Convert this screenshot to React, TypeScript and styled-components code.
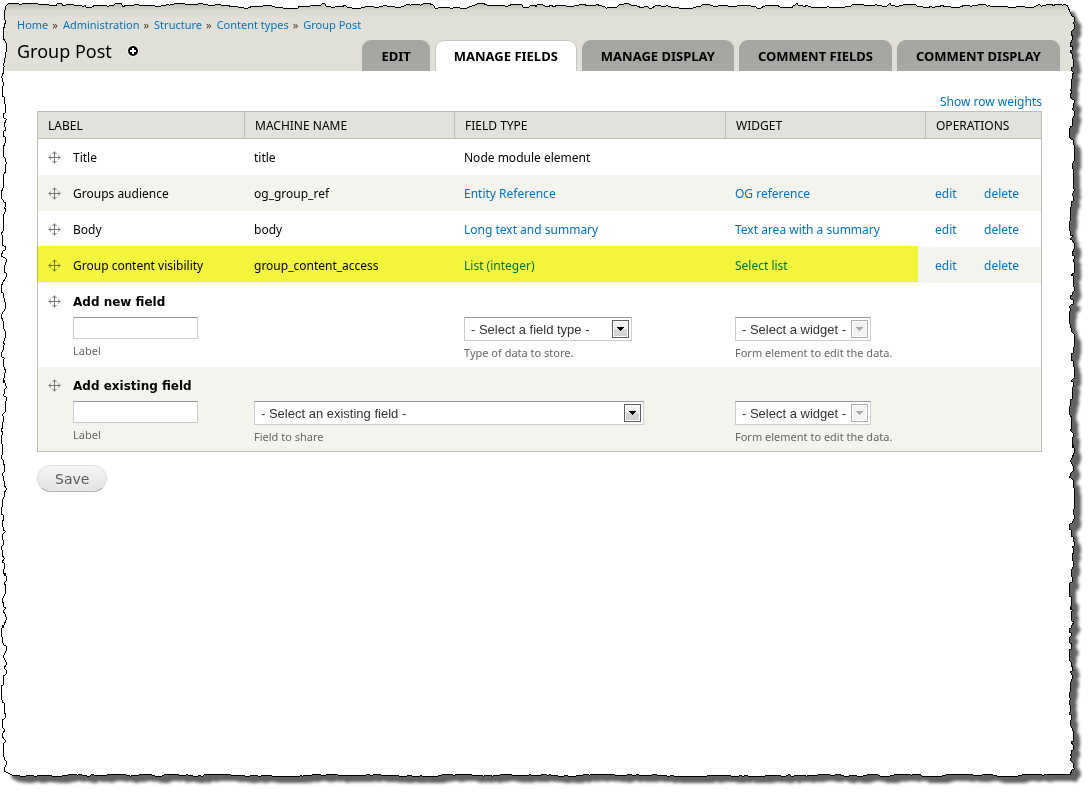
import React, { useId, useLayoutEffect, useRef, useState } from 'react';
import styled, { createGlobalStyle, css } from 'styled-components';

const GlobalStyle = createGlobalStyle`
  *, *::before, *::after { box-sizing: border-box; }
  body {
    margin: 0;
    background: #fff;
    color: #000;
    font: 12px/18px "Noto Sans", "Open Sans", sans-serif;
  }
`;

const Page = styled.div`
  position: relative;
  min-height: 100vh;
  padding-bottom: 48px;
  overflow: hidden;
`;

const Header = styled.header`
  padding: 18px 31px 0 17px;
  background: linear-gradient(#bdbdb6 4px, #d8d8d0 10px, #e0e0d8 18px);
`;

const Breadcrumb = styled.nav`
  display: flex;
  gap: 4px;
  margin-bottom: 8px;
  font-size: 11px;
  line-height: 14px;
`;

const Separator = styled.span`
  padding-right: 1px;
  color: #523d1f;
`;

const Link = styled.a`
  color: #0074bd;
  text-decoration: none;
`;

const HeaderRow = styled.div`
  display: flex;
  justify-content: space-between;
  align-items: flex-end;
`;

const TitleArea = styled.div`
  display: flex;
  align-items: center;
  align-self: flex-start;
  gap: 15px;
`;

const Title = styled.h1`
  margin: 0;
  font-size: 18px;
  font-weight: 400;
  line-height: 22px;
`;

const IconButton = styled.button`
  display: flex;
  flex: none;
  padding: 0;
  border: 0;
  background: none;
  cursor: pointer;
`;

const Tabs = styled.nav`
  display: flex;
  gap: 5px;
`;

const Tab = styled.a<{ $active?: boolean }>`
  padding: 0 18px;
  border: 1px solid #a6a7a2;
  border-bottom: 0;
  border-radius: 9px 9px 0 0;
  background: #a6a7a2;
  color: #000;
  font-size: 13px;
  font-weight: 700;
  line-height: 30px;
  text-decoration: none;
  text-transform: uppercase;
  white-space: nowrap;
  ${(p) =>
    p.$active &&
    css`
      border-color: #c6c7c0;
      background: #fff;
    `}
`;

const Content = styled.main`
  padding: 23px 49px 0 37px;
`;

const WeightToggle = styled.div`
  margin-bottom: 1px;
  line-height: 16px;
  text-align: right;
`;

const FieldTable = styled.table`
  width: 100%;
  table-layout: fixed;
  border: 1px solid #bebfb9;
  border-spacing: 0;
`;

const Col = styled.col<{ $width: number }>`
  width: ${(p) => p.$width}px;
`;

const HeadCell = styled.th`
  height: 27px;
  padding: 2px 10px 0;
  border-right: 1px solid #bebfb9;
  border-bottom: 1px solid #bebfb9;
  background: #e1e2dc;
  font-weight: 400;
  text-align: left;
  text-transform: uppercase;
  &:last-child { border-right: 0; }
`;

const Row = styled.tr<{ $shaded?: boolean }>`
  position: relative;
  background: ${(p) => (p.$shaded ? '#f3f4ee' : '#fff')};
`;

const Cell = styled.td`
  height: 36px;
  padding: 2px 0 0 9px;
  white-space: nowrap;
`;

const FormCell = styled.td`
  height: 84px;
  padding: 34px 0 0 9px;
  vertical-align: top;
  white-space: nowrap;
`;

const AddCell = styled(FormCell)`
  padding-top: 10px;
`;

const LabelGroup = styled.div`
  display: flex;
  align-items: flex-start;
  gap: 12px;
  padding-left: 1px;
`;

const HandleButton = styled(IconButton)`
  margin-top: 2px;
  cursor: move;
`;

const FieldStack = styled.div<{ $indent?: boolean }>`
  display: flex;
  flex-direction: column;
  align-items: flex-start;
  gap: 4px;
  margin: ${(p) => (p.$indent ? '6px 0 0 26px' : '0')};
`;

const AddTitle = styled.strong`
  font-family: "DejaVu Sans", Verdana, sans-serif;
`;

const TextInput = styled.input`
  width: 125px;
  height: 22px;
  padding: 2px;
  border: 1px solid #ccc;
  border-top-color: #999;
  background: #fff;
`;

const Hint = styled.label`
  color: #666;
  font-size: 11px;
  line-height: 16px;
`;

const SelectBox = styled.div<{ $width: number }>`
  position: relative;
  width: ${(p) => p.$width}px;
  height: 24px;
`;

const Select = styled.select`
  appearance: none;
  width: 100%;
  height: 24px;
  padding: 0 20px 0 6px;
  border: 1px solid #ccc;
  border-top-color: #999;
  border-radius: 0;
  background: #fff;
  color: #333;
  font: 13px "Liberation Sans", Arial, sans-serif;
  opacity: 1;
`;

const SelectArrow = styled.span<{ $disabled?: boolean }>`
  position: absolute;
  top: 3px;
  right: 3px;
  display: flex;
  align-items: center;
  justify-content: center;
  width: 17px;
  height: 18px;
  border: 1px solid ${(p) => (p.$disabled ? '#aeaeae' : '#5c5c5c')};
  box-shadow: inset 0 0 0 1px #fff;
  background: ${(p) =>
    p.$disabled ? '#f2f2f2' : 'linear-gradient(#f2f2f2 50%, #d8d8d8 50%, #cfcfcf)'};
  color: ${(p) => (p.$disabled ? '#a8a8a8' : '#000')};
  pointer-events: none;
`;

const Highlight = styled.span`
  position: absolute;
  top: -1px;
  right: 123px;
  left: -1px;
  height: 36px;
  background: #ffff40;
  mix-blend-mode: multiply;
  pointer-events: none;
`;

const SaveButton = styled.button`
  height: 27px;
  margin-top: 13px;
  padding: 0 17px;
  border: 1px solid #e0e0e0;
  border-bottom-color: #b0b0b0;
  border-radius: 14px;
  background: linear-gradient(#f4f4f4, #e4e4e4);
  color: #5a5a5a;
  font: 14px "DejaVu Sans", Verdana, sans-serif;
`;

const EdgeLayer = styled.svg`
  position: absolute;
  inset: 0;
  width: 100%;
  height: 100%;
  pointer-events: none;
`;

/* Seeded random walk that gives one ragged side as offsets along its length. */
function raggedSide(length: number, seed: number, roughness: number): [number, number][] {
  let state = seed;
  const random = () => {
    state = (state * 1664525 + 1013904223) % 4294967296;
    return state / 4294967296;
  };
  const points: [number, number][] = [];
  let at = 0;
  let offset = 0;
  while (at < length) {
    points.push([at, Math.round(offset)]);
    at += random() < 0.5 ? 1 : 2 + Math.floor(random() * 4);
    offset += (random() - 0.5) * roughness - offset * 0.2;
    offset = Math.max(-3, Math.min(2, offset));
  }
  return points;
}

function tornPath(width: number, height: number) {
  const left = 4;
  const top = 6;
  const right = width - 19;
  const bottom = height - 21;
  const w = right - left;
  const h = bottom - top;
  const points = [
    ...raggedSide(w - 4, 11, 3).map(([a, o]) => [left + 2 + a, top + o]),
    ...raggedSide(h - 14, 29, 4).map(([a, o]) => [right + o, top + 10 + a]),
    ...raggedSide(w - 8, 53, 4).map(([a, o]) => [right - 2 - a, bottom + Math.round(o / 2)]),
    ...raggedSide(h - 10, 71, 4).map(([a, o]) => [left + o, bottom - 4 - a]),
  ];
  return 'M' + points.map((p) => p.join(' ')).join('L') + 'Z';
}

function TornEdge() {
  const ref = useRef<SVGSVGElement>(null);
  const [size, setSize] = useState({ width: 0, height: 0 });
  useLayoutEffect(() => {
    const node = ref.current!;
    const measure = () => {
      const box = node.getBoundingClientRect();
      setSize({ width: Math.round(box.width), height: Math.round(box.height) });
    };
    measure();
    const observer = new ResizeObserver(measure);
    observer.observe(node);
    return () => observer.disconnect();
  }, []);
  const { width, height } = size;
  const paper = width ? tornPath(width, height) : '';
  const outside = `M0 0H${width}V${height}H0Z${paper}`;
  return (
    <EdgeLayer ref={ref} aria-hidden="true">
      {paper && (
        <>
          <defs>
            <clipPath id="outside-paper">
              <path d={outside} clipRule="evenodd" />
            </clipPath>
            <filter id="soft">
              <feGaussianBlur stdDeviation="1.5" />
            </filter>
          </defs>
          <path d={outside} fill="#fff" fillRule="evenodd" />
          <g clipPath="url(#outside-paper)">
            <path d={paper} fill="#626262" transform="translate(7 7)" filter="url(#soft)" />
          </g>
          <path d={paper} fill="none" stroke="#000" shapeRendering="crispEdges" />
        </>
      )}
    </EdgeLayer>
  );
}

function DragHandle() {
  return (
    <HandleButton type="button" aria-label="Drag to re-order">
      <svg width="13" height="13" viewBox="0 0 13 13" fill="#787878" shapeRendering="crispEdges">
        <path d="M6 1h1v11H6zM1 6h11v1H1z" />
        <path d="M6 0h1v1H6zM5 1h3v1H5zM4 2h5v1H4zM6 12h1v1H6zM5 11h3v1H5zM4 10h5v1H4zM0 6h1v1H0zM1 5h1v3H1zM2 4h1v5H2zM12 6h1v1h-1zM11 5h1v3h-1zM10 4h1v5h-1z" fillOpacity=".55" />
      </svg>
    </HandleButton>
  );
}

function PlusIcon() {
  return (
    <svg width="12" height="12" viewBox="0 0 12 12">
      <circle cx="6" cy="6" r="6" fill="#f4f4f0" />
      <circle cx="6" cy="6" r="5" fill="#000" />
      <path d="M5 3h2v2h2v2H7v2H5V7H3V5h2z" fill="#fff" />
    </svg>
  );
}

function Dropdown(props: { width: number; text: string; hint: string; disabled?: boolean }) {
  const id = useId();
  return (
    <FieldStack>
      <SelectBox $width={props.width}>
        <Select id={id} disabled={props.disabled}>
          <option>{props.text}</option>
        </Select>
        <SelectArrow $disabled={props.disabled}>
          <svg width="7" height="4" viewBox="0 0 7 4" fill="currentColor" shapeRendering="crispEdges">
            <path d="M0 0h7v1H0zM1 1h5v1H1zM2 2h3v1H2zM3 3h1v1H3z" />
          </svg>
        </SelectArrow>
      </SelectBox>
      <Hint htmlFor={id}>{props.hint}</Hint>
    </FieldStack>
  );
}

function AddField({ title }: { title: string }) {
  const id = useId();
  return (
    <AddCell>
      <LabelGroup>
        <DragHandle />
        <AddTitle>{title}</AddTitle>
      </LabelGroup>
      <FieldStack $indent>
        <TextInput id={id} type="text" />
        <Hint htmlFor={id}>Label</Hint>
      </FieldStack>
    </AddCell>
  );
}

const crumbs = ['Home', 'Administration', 'Structure', 'Content types', 'Group Post'];
const tabs = ['Edit', 'Manage fields', 'Manage display', 'Comment fields', 'Comment display'];
const columnWidths = [207, 210, 271, 200, 49, 66];

const fields = [
  { label: 'Title', name: 'title', type: 'Node module element', widget: '', locked: true },
  { label: 'Groups audience', name: 'og_group_ref', type: 'Entity Reference', widget: 'OG reference' },
  { label: 'Body', name: 'body', type: 'Long text and summary', widget: 'Text area with a summary' },
  {
    label: 'Group content visibility',
    name: 'group_content_access',
    type: 'List (integer)',
    widget: 'Select list',
    marked: true,
  },
];

export default function App() {
  return (
    <Page>
      <GlobalStyle />
      <Header>
        <Breadcrumb aria-label="Breadcrumb">
          {crumbs.map((crumb, i) => (
            <React.Fragment key={crumb}>
              {i > 0 && <Separator>»</Separator>}
              <Link href="#">{crumb}</Link>
            </React.Fragment>
          ))}
        </Breadcrumb>
        <HeaderRow>
          <TitleArea>
            <Title>Group Post</Title>
            <IconButton type="button" aria-label="Add to shortcuts">
              <PlusIcon />
            </IconButton>
          </TitleArea>
          <Tabs aria-label="Primary tabs">
            {tabs.map((tab) => (
              <Tab key={tab} href="#" $active={tab === 'Manage fields'}>
                {tab}
              </Tab>
            ))}
          </Tabs>
        </HeaderRow>
      </Header>
      <Content>
        <WeightToggle>
          <Link href="#">Show row weights</Link>
        </WeightToggle>
        <FieldTable>
          <colgroup>
            {columnWidths.map((width, i) => (
              <Col key={i} $width={width} />
            ))}
          </colgroup>
          <thead>
            <tr>
              <HeadCell>Label</HeadCell>
              <HeadCell>Machine name</HeadCell>
              <HeadCell>Field type</HeadCell>
              <HeadCell>Widget</HeadCell>
              <HeadCell colSpan={2}>Operations</HeadCell>
            </tr>
          </thead>
          <tbody>
            {fields.map((field, i) => (
              <Row key={field.name} $shaded={i % 2 === 1}>
                <Cell>
                  <LabelGroup>
                    <DragHandle />
                    {field.label}
                  </LabelGroup>
                </Cell>
                <Cell>{field.name}</Cell>
                <Cell>{field.locked ? field.type : <Link href="#">{field.type}</Link>}</Cell>
                <Cell>{field.widget && <Link href="#">{field.widget}</Link>}</Cell>
                <Cell>{!field.locked && <Link href="#">edit</Link>}</Cell>
                <Cell>
                  {!field.locked && <Link href="#">delete</Link>}
                  {field.marked && <Highlight />}
                </Cell>
              </Row>
            ))}
            <Row>
              <AddField title="Add new field" />
              <FormCell />
              <FormCell>
                <Dropdown width={168} text="- Select a field type -" hint="Type of data to store." />
              </FormCell>
              <FormCell colSpan={3}>
                <Dropdown width={136} text="- Select a widget -" hint="Form element to edit the data." disabled />
              </FormCell>
            </Row>
            <Row $shaded>
              <AddField title="Add existing field" />
              <FormCell colSpan={2}>
                <Dropdown width={390} text="- Select an existing field -" hint="Field to share" />
              </FormCell>
              <FormCell colSpan={3}>
                <Dropdown width={136} text="- Select a widget -" hint="Form element to edit the data." disabled />
              </FormCell>
            </Row>
          </tbody>
        </FieldTable>
        <SaveButton type="submit">Save</SaveButton>
      </Content>
      <TornEdge />
    </Page>
  );
}
